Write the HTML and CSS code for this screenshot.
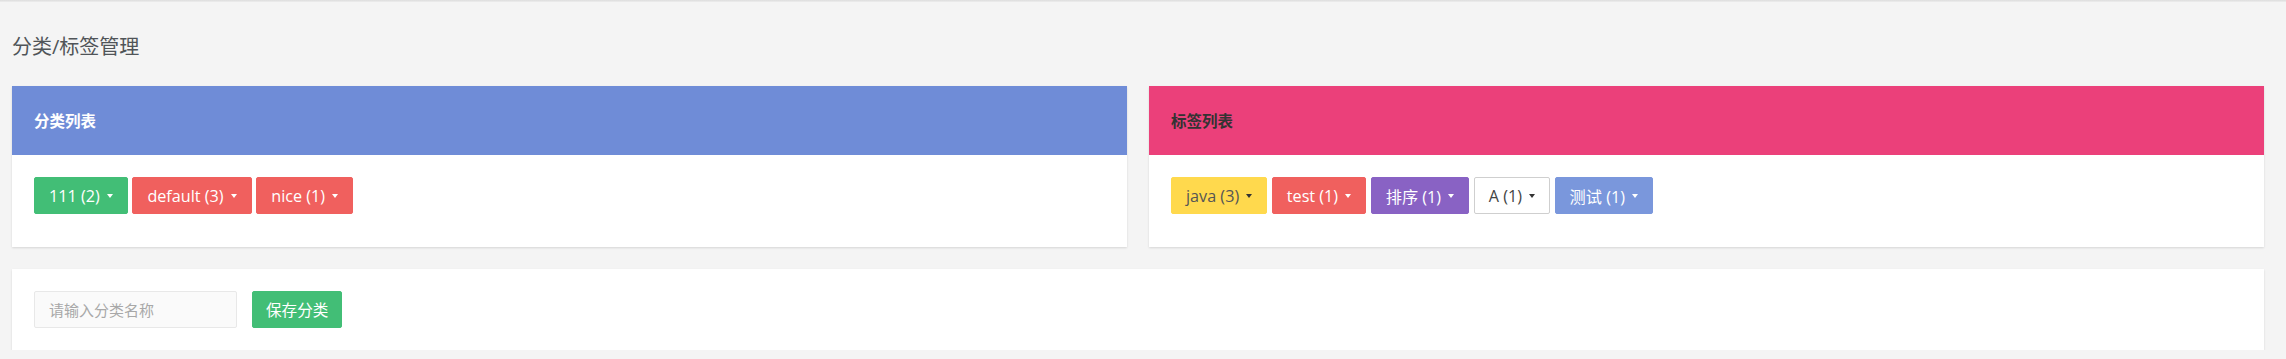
FILE: index.html
```html
<!DOCTYPE html>
<html lang="zh-CN">
<head>
<meta charset="utf-8">
<title>分类/标签管理</title>
<link rel="stylesheet" href="styles.css">
</head>
<body>
<div class="topline"></div>
<div class="page">
  <h4 class="page-title">分类/标签管理</h4>
  <div class="row">
    <div class="panel">
      <div class="panel-heading heading-blue">分类列表</div>
      <div class="panel-body">
        <span class="btn btn-success">111 (2)<span class="caret"></span></span>
        <span class="btn btn-danger">default (3)<span class="caret"></span></span>
        <span class="btn btn-danger">nice (1)<span class="caret"></span></span>
      </div>
    </div>
    <div class="panel">
      <div class="panel-heading heading-pink">标签列表</div>
      <div class="panel-body">
        <span class="btn btn-warning">java (3)<span class="caret"></span></span>
        <span class="btn btn-danger">test (1)<span class="caret"></span></span>
        <span class="btn btn-purple">排序 (1)<span class="caret"></span></span>
        <span class="btn btn-default">A (1)<span class="caret"></span></span>
        <span class="btn btn-primary">测试 (1)<span class="caret"></span></span>
      </div>
    </div>
  </div>
  <div class="panel form-panel">
    <input class="form-control" type="text" placeholder="请输入分类名称">
    <span class="btn btn-success btn-save">保存分类</span>
  </div>
</div>
</body>
</html>
```

FILE: styles.css
```css
html, body {
  margin: 0;
  padding: 0;
}
body {
  background: #f4f4f4;
  font-family: "Open Sans", "Noto Sans CJK SC", sans-serif;
  color: #505458;
}
.topline {
  height: 2px;
  background: linear-gradient(to bottom, #dcdcdc, #ededed);
}
.page {
  padding: 0 22px 0 12px;
}
.page-title {
  margin: 34px 0 28px;
  font-size: 20px;
  line-height: 22px;
  font-weight: normal;
  color: #505458;
}
.row {
  display: grid;
  grid-template-columns: 1fr 1fr;
  gap: 22px;
  margin-bottom: 22px;
}
.panel {
  background: #fff;
  box-shadow: 0 1px 2px rgba(0, 0, 0, 0.12);
}
.panel-heading {
  height: 69px;
  padding: 0 22px;
  display: flex;
  align-items: center;
  font-size: 15.5px;
  font-weight: bold;
}
.heading-blue {
  background: #6f8cd7;
  color: #fff;
}
.heading-pink {
  background: #eb407a;
  color: #333;
}
.panel-body {
  padding: 22px 22px 33px;
  display: flex;
  gap: 4.6px;
}
.btn {
  display: inline-flex;
  align-items: center;
  box-sizing: border-box;
  height: 37px;
  padding: 0 14px;
  border: 1px solid transparent;
  border-radius: 2px;
  font-size: 16.2px;
  color: #fff;
  white-space: nowrap;
}
.caret {
  display: inline-block;
  width: 0;
  height: 0;
  margin-left: 7px;
  border-top: 4px solid currentColor;
  border-left: 3.5px solid transparent;
  border-right: 3.5px solid transparent;
}
.btn-success {
  background: #42be76;
  border-color: #42be76;
}
.btn-danger {
  background: #f0605e;
  border-color: #f0605e;
}
.btn-warning {
  background: #ffd94d;
  border-color: #ffd94d;
  color: #555;
}
.btn-warning .caret {
  border-top-color: #333;
}
.btn-purple {
  background: #8962c4;
  border-color: #8962c4;
}
.btn-default {
  background: #fff;
  border-color: #cfcfcf;
  color: #444;
}
.btn-default .caret {
  border-top-color: #333;
}
.btn-primary {
  background: #7a97dc;
  border-color: #7a97dc;
}
.form-panel {
  display: flex;
  align-items: flex-start;
  padding: 22px;
}
.form-control {
  box-sizing: border-box;
  width: 203px;
  height: 37px;
  margin: 0;
  padding: 0 14px;
  background: #fafafa;
  border: 1px solid #e8e8e8;
  border-radius: 2px;
  font-family: "Open Sans", "Noto Sans CJK SC", sans-serif;
  font-size: 15px;
  color: #555;
  outline: none;
}
.form-control::placeholder {
  color: #a8a8a8;
}
.btn-save {
  margin-left: 15px;
  height: 37px;
  padding: 0 13px;
  font-size: 15.6px;
}
```
